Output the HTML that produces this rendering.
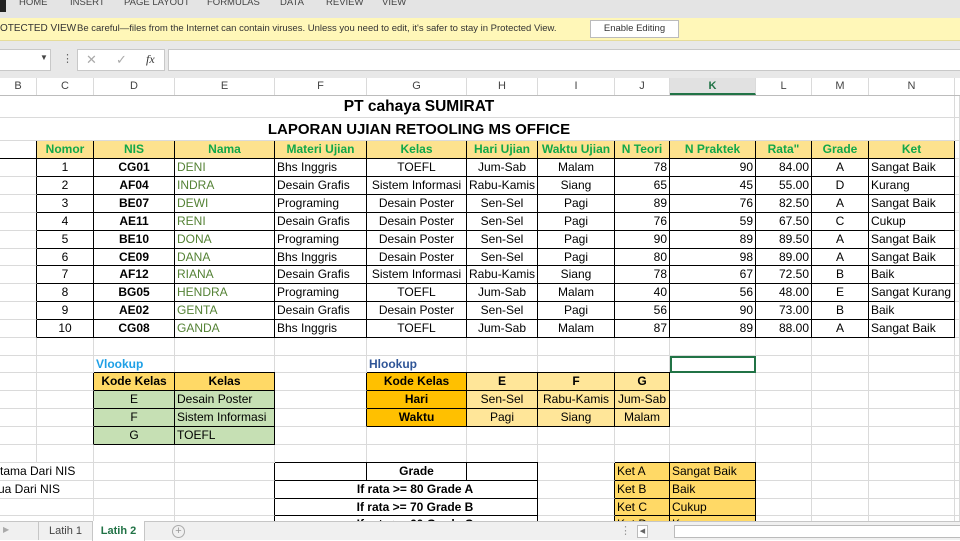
<!DOCTYPE html>
<html><head><meta charset="utf-8">
<style>
*{margin:0;padding:0;box-sizing:border-box}
body{width:960px;height:540px;overflow:hidden;background:#fff;font-family:"Liberation Sans",Arial,sans-serif;font-size:12px;color:#000;position:relative}
.abs{position:absolute}
#rib{left:0;top:0;width:960px;height:18px;background:#e4e4e4;font-size:9.5px;color:#444}
#rib span{position:absolute;top:-3px}
#pv{left:0;top:18px;width:960px;height:23px;background:#fff7b8;border-bottom:1px solid #e6dc9a;font-size:9.5px;color:#333}
#fb{left:0;top:41px;width:960px;height:38px;background:#e8e8e8}
.box{position:absolute;background:#fff;border:1px solid #c8c8c8}
#ch{left:0;top:78px;width:960px;height:18px;background:#fff;border-bottom:1px solid #bcbcbc;font-size:11px;color:#444}
#ch div{position:absolute;top:0;height:17px;line-height:17px;text-align:center;border-right:1px solid #dadada}
table{position:absolute;left:0;top:96px;border-collapse:separate;border-spacing:0;table-layout:fixed;width:960px}
td{border-right:1px solid #dadada;border-bottom:1px solid #dadada;padding:0 2px;white-space:nowrap;overflow:hidden;line-height:15px;font-size:12px}
.k{border-right-color:#000;border-bottom-color:#000}
.t{box-shadow:0 -1px 0 #000}
.c{text-align:center}.r{text-align:right}.b{font-weight:bold}
.hd{background:#fde28e;color:#12a84a;font-weight:bold;text-align:center}
.g{color:#548235}
.y{background:#ffd966}.o{background:#ffc000}.ly{background:#ffe699}.gr{background:#c6e0b4}
#tabs{left:0;top:521px;width:960px;height:19px;background:#f0f0f0;border-top:1px solid #c6c6c6;font-size:11px;color:#444}
</style></head><body>
<div id="rib" class="abs"><div class="abs" style="left:0;top:0;width:6px;height:12px;background:#222"></div>
<span style="left:19px">HOME</span><span style="left:70px">INSERT</span><span style="left:124px">PAGE LAYOUT</span><span style="left:207px">FORMULAS</span><span style="left:280px">DATA</span><span style="left:326px">REVIEW</span><span style="left:382px">VIEW</span></div>
<div id="pv" class="abs"><span class="abs" style="left:0;top:5px;font-size:10px">OTECTED VIEW</span><span class="abs" style="left:77px;top:5px">Be careful—files from the Internet can contain viruses. Unless you need to edit, it's safer to stay in Protected View.</span>
<div class="abs" style="left:590px;top:2px;width:89px;height:18px;background:#fff;border:1px solid #bbb;text-align:center;line-height:16px">Enable Editing</div></div>
<div id="fb" class="abs">
<div class="box" style="left:-1px;top:8px;width:52px;height:22px"><span class="abs" style="left:40px;top:3px;font-size:8px;color:#444">▼</span></div>
<span class="abs" style="left:62px;top:11px;color:#666;font-size:11px">⋮</span>
<div class="box" style="left:77px;top:8px;width:88px;height:22px;color:#aaa;font-size:13px"><span class="abs" style="left:8px;top:2px">✕</span><span class="abs" style="left:38px;top:2px">✓</span><span class="abs" style="left:68px;top:2px;color:#333;font-family:'Liberation Serif',serif;font-style:italic;font-size:12px">fx</span></div>
<div class="box" style="left:168px;top:8px;width:800px;height:22px"></div></div>
<div id="ch" class="abs">
<div style="left:0;width:37px">B</div><div style="left:37px;width:57px">C</div><div style="left:94px;width:81px">D</div><div style="left:175px;width:100px">E</div><div style="left:275px;width:92px">F</div><div style="left:367px;width:100px">G</div><div style="left:467px;width:71px">H</div><div style="left:538px;width:77px">I</div><div style="left:615px;width:55px">J</div><div style="left:670px;width:86px;background:#e1e1e1;color:#217346;font-weight:bold;border-bottom:2px solid #217346">K</div><div style="left:756px;width:56px">L</div><div style="left:812px;width:57px">M</div><div style="left:869px;width:86px">N</div></div>
<table>
<colgroup><col style="width:37px"><col style="width:57px"><col style="width:81px"><col style="width:100px"><col style="width:92px"><col style="width:100px"><col style="width:71px"><col style="width:77px"><col style="width:55px"><col style="width:86px"><col style="width:56px"><col style="width:57px"><col style="width:86px"><col style="width:5px"></colgroup>
<tr style="height:22px"><td colspan="13"></td><td></td></tr>
<tr style="height:23px"><td colspan="13"></td><td></td></tr>
<tr style="height:18px"><td class="k" style="border-right-color:#000"></td><td class="k hd">Nomor</td><td class="k hd">NIS</td><td class="k hd">Nama</td><td class="k hd">Materi Ujian</td><td class="k hd">Kelas</td><td class="k hd">Hari Ujian</td><td class="k hd">Waktu Ujian</td><td class="k hd">N Teori</td><td class="k hd">N Praktek</td><td class="k hd">Rata"</td><td class="k hd">Grade</td><td class="k hd">Ket</td><td></td></tr>
<tr style="height:18px"><td class="k" style="border-bottom-color:#dadada"></td><td class="k c">1</td><td class="k c b">CG01</td><td class="k g">DENI</td><td class="k">Bhs Inggris</td><td class="k c">TOEFL</td><td class="k c">Jum-Sab</td><td class="k c">Malam</td><td class="k r">78</td><td class="k r">90</td><td class="k r">84.00</td><td class="k c">A</td><td class="k">Sangat Baik</td><td></td></tr>
<tr style="height:18px"><td class="k" style="border-bottom-color:#dadada"></td><td class="k c">2</td><td class="k c b">AF04</td><td class="k g">INDRA</td><td class="k">Desain Grafis</td><td class="k c">Sistem Informasi</td><td class="k c">Rabu-Kamis</td><td class="k c">Siang</td><td class="k r">65</td><td class="k r">45</td><td class="k r">55.00</td><td class="k c">D</td><td class="k">Kurang</td><td></td></tr>
<tr style="height:18px"><td class="k" style="border-bottom-color:#dadada"></td><td class="k c">3</td><td class="k c b">BE07</td><td class="k g">DEWI</td><td class="k">Programing</td><td class="k c">Desain Poster</td><td class="k c">Sen-Sel</td><td class="k c">Pagi</td><td class="k r">89</td><td class="k r">76</td><td class="k r">82.50</td><td class="k c">A</td><td class="k">Sangat Baik</td><td></td></tr>
<tr style="height:18px"><td class="k" style="border-bottom-color:#dadada"></td><td class="k c">4</td><td class="k c b">AE11</td><td class="k g">RENI</td><td class="k">Desain Grafis</td><td class="k c">Desain Poster</td><td class="k c">Sen-Sel</td><td class="k c">Pagi</td><td class="k r">76</td><td class="k r">59</td><td class="k r">67.50</td><td class="k c">C</td><td class="k">Cukup</td><td></td></tr>
<tr style="height:18px"><td class="k" style="border-bottom-color:#dadada"></td><td class="k c">5</td><td class="k c b">BE10</td><td class="k g">DONA</td><td class="k">Programing</td><td class="k c">Desain Poster</td><td class="k c">Sen-Sel</td><td class="k c">Pagi</td><td class="k r">90</td><td class="k r">89</td><td class="k r">89.50</td><td class="k c">A</td><td class="k">Sangat Baik</td><td></td></tr>
<tr style="height:17px"><td class="k" style="border-bottom-color:#dadada"></td><td class="k c">6</td><td class="k c b">CE09</td><td class="k g">DANA</td><td class="k">Bhs Inggris</td><td class="k c">Desain Poster</td><td class="k c">Sen-Sel</td><td class="k c">Pagi</td><td class="k r">80</td><td class="k r">98</td><td class="k r">89.00</td><td class="k c">A</td><td class="k">Sangat Baik</td><td></td></tr>
<tr style="height:18px"><td class="k" style="border-bottom-color:#dadada"></td><td class="k c">7</td><td class="k c b">AF12</td><td class="k g">RIANA</td><td class="k">Desain Grafis</td><td class="k c">Sistem Informasi</td><td class="k c">Rabu-Kamis</td><td class="k c">Siang</td><td class="k r">78</td><td class="k r">67</td><td class="k r">72.50</td><td class="k c">B</td><td class="k">Baik</td><td></td></tr>
<tr style="height:18px"><td class="k" style="border-bottom-color:#dadada"></td><td class="k c">8</td><td class="k c b">BG05</td><td class="k g">HENDRA</td><td class="k">Programing</td><td class="k c">TOEFL</td><td class="k c">Jum-Sab</td><td class="k c">Malam</td><td class="k r">40</td><td class="k r">56</td><td class="k r">48.00</td><td class="k c">E</td><td class="k">Sangat Kurang</td><td></td></tr>
<tr style="height:18px"><td class="k" style="border-bottom-color:#dadada"></td><td class="k c">9</td><td class="k c b">AE02</td><td class="k g">GENTA</td><td class="k">Desain Grafis</td><td class="k c">Desain Poster</td><td class="k c">Sen-Sel</td><td class="k c">Pagi</td><td class="k r">56</td><td class="k r">90</td><td class="k r">73.00</td><td class="k c">B</td><td class="k">Baik</td><td></td></tr>
<tr style="height:18px"><td class="k" style="border-bottom-color:#dadada"></td><td class="k c">10</td><td class="k c b">CG08</td><td class="k g">GANDA</td><td class="k">Bhs Inggris</td><td class="k c">TOEFL</td><td class="k c">Jum-Sab</td><td class="k c">Malam</td><td class="k r">87</td><td class="k r">89</td><td class="k r">88.00</td><td class="k c">A</td><td class="k">Sangat Baik</td><td></td></tr>
<tr style="height:18px"><td></td><td></td><td></td><td></td><td></td><td></td><td></td><td></td><td></td><td></td><td></td><td></td><td></td><td></td></tr>
<tr style="height:17px"><td></td><td></td><td class="b" style="color:#1ea0e6">Vlookup</td><td></td><td></td><td class="b" style="color:#2f5597">Hlookup</td><td></td><td></td><td></td><td style="outline:2px solid #217346;outline-offset:-2px"></td><td></td><td></td><td></td><td></td></tr>
<tr style="height:18px"><td></td><td class="k" style="border-bottom-color:#dadada"></td><td class="k y c b t">Kode Kelas</td><td class="k y c b t">Kelas</td><td class="k" style="border-bottom-color:#dadada"></td><td class="k o c b t">Kode Kelas</td><td class="k ly c b t">E</td><td class="k ly c b t">F</td><td class="k ly c b t">G</td><td></td><td></td><td></td><td></td><td></td></tr>
<tr style="height:18px"><td></td><td class="k" style="border-bottom-color:#dadada"></td><td class="k gr c">E</td><td class="k gr">Desain Poster</td><td class="k" style="border-bottom-color:#dadada"></td><td class="k o c b">Hari</td><td class="k ly c">Sen-Sel</td><td class="k ly c">Rabu-Kamis</td><td class="k ly c">Jum-Sab</td><td></td><td></td><td></td><td></td><td></td></tr>
<tr style="height:18px"><td></td><td class="k" style="border-bottom-color:#dadada"></td><td class="k gr c">F</td><td class="k gr">Sistem Informasi</td><td class="k" style="border-bottom-color:#dadada"></td><td class="k o c b">Waktu</td><td class="k ly c">Pagi</td><td class="k ly c">Siang</td><td class="k ly c">Malam</td><td></td><td></td><td></td><td></td><td></td></tr>
<tr style="height:18px"><td></td><td class="k" style="border-bottom-color:#dadada"></td><td class="k gr c">G</td><td class="k gr">TOEFL</td><td></td><td></td><td></td><td></td><td></td><td></td><td></td><td></td><td></td><td></td></tr>
<tr style="height:18px"><td></td><td></td><td></td><td></td><td></td><td></td><td></td><td></td><td></td><td></td><td></td><td></td><td></td><td></td></tr>
<tr style="height:18px"><td colspan="2" style="overflow:visible;position:relative"><span style="position:absolute;left:0;top:1px">tama Dari NIS</span></td><td></td><td class="k" style="border-bottom-color:#dadada"></td><td class="k t"></td><td class="k c b t">Grade</td><td class="k t"></td><td class="k" style="border-bottom-color:#dadada"></td><td class="k y t">Ket A</td><td class="k y t">Sangat Baik</td><td></td><td></td><td></td><td></td></tr>
<tr style="height:18px"><td colspan="2" style="overflow:visible;position:relative"><span style="position:absolute;left:-2px;top:1px">ua Dari NIS</span></td><td></td><td class="k" style="border-bottom-color:#dadada"></td><td class="k c b" colspan="3" style="padding-left:20px">If rata &gt;= 80 Grade A</td><td class="k" style="border-bottom-color:#dadada"></td><td class="k y">Ket B</td><td class="k y">Baik</td><td></td><td></td><td></td><td></td></tr>
<tr style="height:17px"><td colspan="2"></td><td></td><td class="k" style="border-bottom-color:#dadada"></td><td class="k c b" colspan="3" style="padding-left:20px">If rata &gt;= 70 Grade B</td><td class="k" style="border-bottom-color:#dadada"></td><td class="k y">Ket C</td><td class="k y">Cukup</td><td></td><td></td><td></td><td></td></tr>
<tr style="height:18px"><td colspan="2"></td><td></td><td class="k" style="border-bottom-color:#dadada"></td><td class="k c b" colspan="3" style="padding-left:20px">If rata &gt;= 60 Grade C</td><td class="k" style="border-bottom-color:#dadada"></td><td class="k y">Ket D</td><td class="k y">Kurang</td><td></td><td></td><td></td><td></td></tr>
</table>
<div class="abs b" style="left:0;top:97px;width:838px;text-align:center;font-size:15.5px;line-height:20px">PT cahaya SUMIRAT</div>
<div class="abs b" style="left:0;top:120px;width:838px;text-align:center;font-size:15px;line-height:20px">LAPORAN UJIAN RETOOLING MS OFFICE</div>
<div id="tabs" class="abs">
<span class="abs" style="left:3px;top:3px;color:#aaa;font-size:8px">▶</span>
<div class="abs" style="left:38px;top:0;width:1px;height:18px;background:#c6c6c6"></div>
<span class="abs" style="left:49px;top:3px">Latih 1</span>
<div class="abs" style="left:92px;top:-1px;width:53px;height:20px;background:#fff;border-left:1px solid #c6c6c6;border-right:1px solid #c6c6c6;color:#217346;font-weight:bold;text-align:center;line-height:20px">Latih 2</div>
<div class="abs" style="left:172px;top:3px;width:13px;height:13px;border:1px solid #aaa;border-radius:50%;color:#999;font-size:11px;line-height:10px;text-align:center">+</div>
<span class="abs" style="left:620px;top:2px;color:#999">⋮</span>
<div class="abs" style="left:637px;top:3px;width:11px;height:13px;border:1px solid #bbb;background:#fff;font-size:7px;color:#666;text-align:center;line-height:11px">◀</div>
<div class="abs" style="left:674px;top:3px;width:290px;height:13px;border:1px solid #bbb;background:#fff"></div>
</div>
</body></html>
